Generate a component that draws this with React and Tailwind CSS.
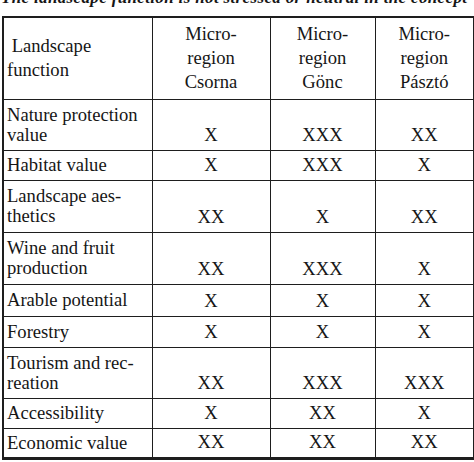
import React from "react";

const rows = [
  { label: ["Nature protection", "value"], v: ["X", "XXX", "XX"], h: "h-[51px]" },
  { label: ["Habitat value"], v: ["X", "XXX", "X"], h: "h-[30px]" },
  { label: ["Landscape aes-", "thetics"], v: ["XX", "X", "XX"], h: "h-[52px]" },
  { label: ["Wine and fruit", "production"], v: ["XX", "XXX", "X"], h: "h-[52px]" },
  { label: ["Arable potential"], v: ["X", "X", "X"], h: "h-[32px]" },
  { label: ["Forestry"], v: ["X", "X", "X"], h: "h-[31px]" },
  { label: ["Tourism and rec-", "reation"], v: ["XX", "XXX", "XXX"], h: "h-[51px]" },
  { label: ["Accessibility"], v: ["X", "XX", "X"], h: "h-[30px]" },
  { label: ["Economic value"], v: ["XX", "XX", "XX"], h: "h-[30px]" },
];

const regions = ["Csorna", "Gönc", "Pásztó"];

export default function App() {
  return (
    <div
      className="w-[474px] h-[462px] overflow-hidden bg-white text-[#161616]"
      style={{ fontFamily: '"Liberation Serif", "Times New Roman", serif' }}
    >
      <div className="mt-[-11px] h-[18px] overflow-visible whitespace-nowrap pl-[1px] text-[17px] leading-[17px] font-bold italic tracking-[0.35px]">
        The landscape function is not stressed or neutral in the concept
      </div>
      <table className="ml-[2px] mt-[9px] w-[471px] table-fixed border-collapse border-2 border-b-[3px] border-[#1e1e1e] text-[18.6px] leading-[20px]">
        <colgroup>
          <col className="w-[149px]" />
          <col className="w-[118px]" />
          <col className="w-[105px]" />
          <col className="w-[99px]" />
        </colgroup>
        <thead>
          <tr className="h-[82px]">
            <th className="border border-[#1e1e1e] pl-[3px] pr-[2px] text-left align-middle font-normal leading-[24px]">
              <div className="whitespace-pre"> Landscape</div>
              <div>function</div>
            </th>
            {regions.map((r) => (
              <th
                key={r}
                className="border border-[#1e1e1e] text-center align-middle font-normal leading-[24px]"
              >
                <div>Micro-</div>
                <div>region</div>
                <div>{r}</div>
              </th>
            ))}
          </tr>
        </thead>
        <tbody>
          {rows.map((row) => (
            <tr key={row.label[0]} className={row.h}>
              <td className="border border-[#1e1e1e] pl-[3px] pr-[2px] align-middle whitespace-nowrap">
                {row.label.map((l) => (
                  <div key={l}>{l}</div>
                ))}
              </td>
              {row.v.map((v, i) => (
                <td
                  key={i}
                  className="border border-[#1e1e1e] pb-[5px] text-center align-bottom"
                >
                  {v}
                </td>
              ))}
            </tr>
          ))}
        </tbody>
      </table>
    </div>
  );
}
